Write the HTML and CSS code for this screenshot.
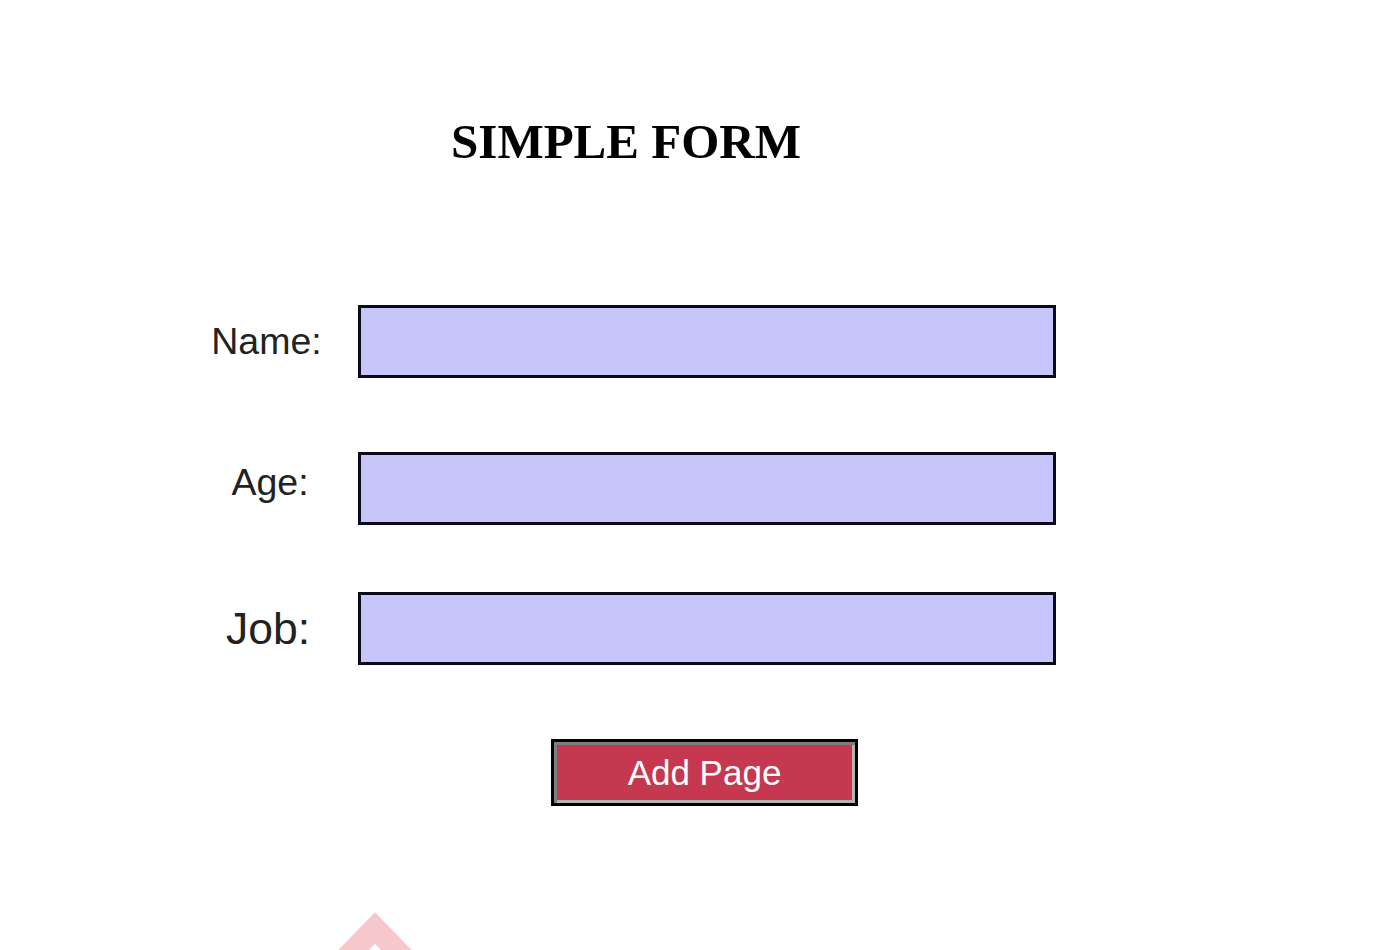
FILE: index.html
```html
<!DOCTYPE html>
<html lang="en">

<head>
  <meta charset="UTF-8">
  <meta name="viewport" content="width=device-width, initial-scale=1.0">
  <title>Simple Form</title>
  <link rel="stylesheet" href="styles.css">
</head>

<body>
  <h1 class="title">SIMPLE FORM</h1>

  <form class="form">
    <div class="row">
      <label class="label" for="name">Name:</label>
      <input class="field" type="text" id="name">
    </div>
    <div class="row row-age">
      <label class="label" for="age">Age:</label>
      <input class="field" type="text" id="age">
    </div>
    <div class="row row-job">
      <label class="label label-big" for="job">Job:</label>
      <input class="field" type="text" id="job">
    </div>
    <div class="actions">
      <button class="btn" type="button">Add Page</button>
    </div>
  </form>

  <a class="to-top" href="#">
    <svg width="90" height="50" viewBox="0 0 90 50">
      <polyline points="4,54 39,18 74,54" fill="none" stroke="#f6c8cb" stroke-width="22" />
    </svg>
  </a>
</body>

</html>
```

FILE: styles.css
```css
body {
  margin: 0;
  height: 950px;
  overflow: hidden;
  background: #ffffff;
  position: relative;
}

.title {
  margin: 0;
  padding: 114px 136px 0 0;
  text-align: center;
  font-family: 'Liberation Serif', 'Times New Roman', serif;
  font-size: 49px;
  font-weight: bold;
  line-height: 56px;
  color: #000;
}

.form {
  margin: 135px 0 0 178px;
}

.row {
  display: grid;
  grid-template-columns: 180px 698px;
  align-items: center;
}

.row-age {
  margin-top: 74px;
}

.row-job {
  margin-top: 67px;
}

.label {
  text-align: center;
  font-family: 'Liberation Sans', Arial, sans-serif;
  font-size: 37.5px;
  color: #222;
}

.row:first-child .label {
  padding-right: 3px;
}

.row-age .label {
  padding: 0 0 12px 4px;
}

.label-big {
  font-size: 44.5px;
}

.field {
  box-sizing: border-box;
  width: 698px;
  height: 73px;
  margin: 0;
  border: 3px solid #0c0a18;
  background: #c6c6fa;
  outline: none;
}

.actions {
  margin: 74px 0 0 373px;
}

.btn {
  box-sizing: border-box;
  width: 307px;
  height: 67px;
  border: 3px solid #000;
  padding: 0;
  background: #c5384f;
  box-shadow: inset 3px 3px 0 #7e7e7e, inset -3px -3px 0 #b4b4b4;
  font-family: 'Liberation Sans', Arial, sans-serif;
  font-size: 35px;
  color: #fff;
  cursor: pointer;
}

.to-top {
  position: absolute;
  left: 336px;
  top: 910px;
}

.to-top svg {
  display: block;
}
```
